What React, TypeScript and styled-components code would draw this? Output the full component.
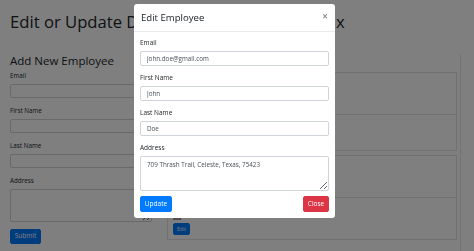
import styled, { createGlobalStyle } from "styled-components";

const GlobalStyle = createGlobalStyle`
  html, body {
    margin: 0;
    padding: 0;
    background: #fff;
    font-family: "Open Sans", "Liberation Sans", sans-serif;
    color: #212529;
  }
  * {
    box-sizing: border-box;
  }
`;

const Page = styled.div`
  padding: 12px 10px 0;
  height: 251px;
  overflow: hidden;
`;

const Title = styled.h1`
  margin: 0 0 22px;
  font-size: 16.65px;
  line-height: 20px;
  font-weight: 500;
  white-space: nowrap;
`;

const Row = styled.div`
  display: flex;
  gap: 15px;
  align-items: flex-start;
`;

const LeftCol = styled.div`
  width: 142px;
`;

const RightCol = styled.div`
  width: 294px;
  padding-right: 3px;
  border-right: 1px solid #e4e7ea;
  height: 200px;
`;

const SectionTitle = styled.h2<{ $mb?: number }>`
  margin: 0 0 ${(p) => p.$mb ?? 3}px;
  font-size: 11.5px;
  line-height: 14px;
  font-weight: 500;
`;

const FormGroup = styled.div<{ $gap?: number }>`
  margin-bottom: ${(p) => p.$gap ?? 8}px;
`;

const Label = styled.label<{ $size?: number }>`
  display: block;
  font-size: ${(p) => p.$size ?? 6.3}px;
  line-height: ${(p) => (p.$size ? 10 : 9)}px;
  margin-bottom: ${(p) => (p.$size ? 3 : 4)}px;
  color: #212529;
`;

const Input = styled.input<{ $h?: number }>`
  display: block;
  width: 100%;
  height: ${(p) => p.$h ?? 14}px;
  padding: 0 6px;
  font-family: inherit;
  font-size: 6.3px;
  color: #495057;
  background: #fff;
  border: 1px solid #ced4da;
  border-radius: 2px;
  outline: none;
`;

const TextArea = styled.textarea<{ $h: number }>`
  display: block;
  width: 100%;
  height: ${(p) => p.$h}px;
  padding: 3px 6px;
  font-family: inherit;
  font-size: 6.3px;
  line-height: 9.5px;
  color: #495057;
  background: #fff;
  border: 1px solid #ced4da;
  border-radius: 2px;
  outline: none;
  resize: vertical;
`;

const ButtonRow = styled.div<{ $spread?: boolean; $mt?: number }>`
  display: flex;
  justify-content: ${(p) => (p.$spread ? "space-between" : "flex-start")};
  margin-top: ${(p) => p.$mt ?? 0}px;
`;

const Button = styled.button<{ $variant?: "primary" | "danger"; $w: number; $h: number; $size?: number }>`
  display: flex;
  align-items: center;
  justify-content: center;
  width: ${(p) => p.$w}px;
  height: ${(p) => p.$h}px;
  padding: 0;
  font-family: inherit;
  font-size: ${(p) => p.$size ?? 6.5}px;
  line-height: 1;
  color: #fff;
  background: ${(p) => (p.$variant === "danger" ? "#dc3545" : "#007bff")};
  border: 1px solid ${(p) => (p.$variant === "danger" ? "#dc3545" : "#007bff")};
  border-radius: 2px;
  cursor: pointer;
`;

const Card = styled.div`
  border: 1px solid #dee2e6;
  margin-bottom: 4px;
`;

const CardHeader = styled.div`
  height: 42px;
  padding: 4px 5px;
  font-size: 7px;
  border-bottom: 1px solid #dee2e6;
`;

const CardBody = styled.div`
  padding: 5px 5px 4px;
`;

const InfoLine = styled.div`
  font-size: 5px;
  line-height: 6px;
`;

const Backdrop = styled.div`
  position: fixed;
  inset: 0;
  background: rgba(0, 0, 0, 0.5);
`;

const Modal = styled.div`
  position: fixed;
  left: 134px;
  top: 4px;
  width: 201px;
  background: #fff;
  border-radius: 3px;
  overflow: hidden;
`;

const ModalHeader = styled.div`
  height: 28px;
  padding: 0 7px;
  display: flex;
  align-items: center;
  justify-content: space-between;
  border-bottom: 1px solid #e9ecef;
`;

const ModalTitle = styled.h5`
  margin: 0;
  font-size: 9.6px;
  font-weight: 500;
  color: #212529;
`;

const CloseX = styled.span`
  font-size: 10px;
  font-weight: 700;
  line-height: 1;
  color: #000;
  opacity: 0.45;
  margin-top: -3px;
`;

const ModalBody = styled.div`
  padding: 6px 6px 0;
`;

const ModalFooter = styled(ButtonRow)`
  padding: 5px 6px 6px;
`;

const employees = [
  { name: "John Doe", email: "john.doe@gmail.com", address: "709 Thrash Trail", lines: 2 },
  { name: "aaa aaa", email: "aaa@aaa.com", address: "aaa", lines: 3 },
];

const App = () => {
  return (
    <>
      <GlobalStyle />
      <Page>
        <Title>Edit or Update Data Using React and Redux</Title>
        <Row>
          <LeftCol>
            <SectionTitle>Add New Employee</SectionTitle>
            <form>
              <FormGroup>
                <Label>Email</Label>
                <Input />
              </FormGroup>
              <FormGroup>
                <Label>First Name</Label>
                <Input />
              </FormGroup>
              <FormGroup>
                <Label>Last Name</Label>
                <Input />
              </FormGroup>
              <FormGroup $gap={7}>
                <Label>Address</Label>
                <TextArea $h={33} />
              </FormGroup>
              <ButtonRow>
                <Button type="button" $w={31} $h={15}>
                  Submit
                </Button>
              </ButtonRow>
            </form>
          </LeftCol>
          <RightCol>
            <SectionTitle $mb={4}>Employee List</SectionTitle>
            {employees.map((e) => (
              <Card key={e.email}>
                <CardHeader>{e.name}</CardHeader>
                <CardBody>
                  <InfoLine>{e.email}</InfoLine>
                  {e.lines > 2 && <InfoLine>{e.name}</InfoLine>}
                  <InfoLine>{e.address}</InfoLine>
                  <ButtonRow $mt={2}>
                    <Button type="button" $w={17} $h={12} $size={5}>
                      Edit
                    </Button>
                  </ButtonRow>
                </CardBody>
              </Card>
            ))}
          </RightCol>
        </Row>
      </Page>

      <Backdrop />
      <Modal>
        <ModalHeader>
          <ModalTitle>Edit Employee</ModalTitle>
          <CloseX>×</CloseX>
        </ModalHeader>
        <ModalBody>
          <FormGroup $gap={7}>
            <Label $size={6.5}>Email</Label>
            <Input $h={15} defaultValue="john.doe@gmail.com" />
          </FormGroup>
          <FormGroup $gap={7}>
            <Label $size={6.5}>First Name</Label>
            <Input $h={15} defaultValue="John" />
          </FormGroup>
          <FormGroup $gap={7}>
            <Label $size={6.5}>Last Name</Label>
            <Input $h={15} defaultValue="Doe" />
          </FormGroup>
          <FormGroup $gap={0}>
            <Label $size={6.5}>Address</Label>
            <TextArea $h={35} defaultValue="709 Thrash Trail, Celeste, Texas, 75423" />
          </FormGroup>
        </ModalBody>
        <ModalFooter $spread>
          <Button type="button" $w={32} $h={16}>
            Update
          </Button>
          <Button type="button" $variant="danger" $w={26} $h={16}>
            Close
          </Button>
        </ModalFooter>
      </Modal>
    </>
  );
};

export default App;
